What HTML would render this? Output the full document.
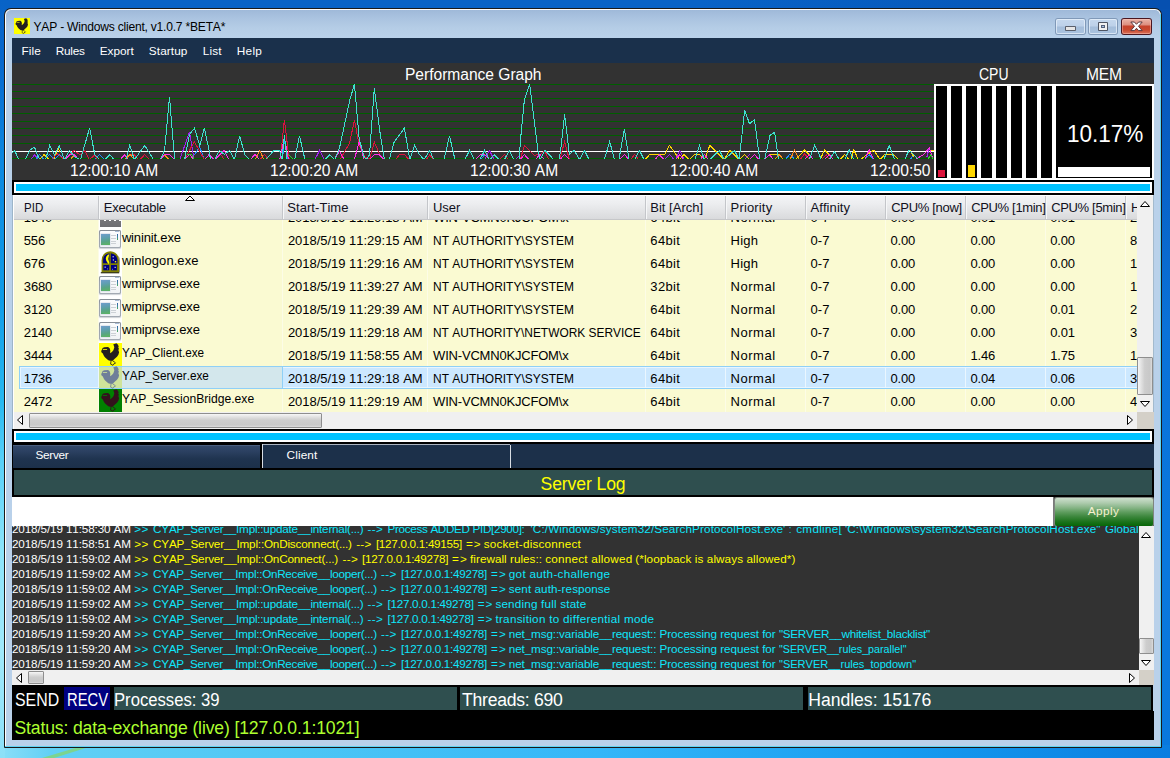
<!DOCTYPE html>
<html><head><meta charset="utf-8"><title>YAP - Windows client</title>
<style>
html,body{margin:0;padding:0;}
body{width:1170px;height:758px;overflow:hidden;position:relative;font-family:"Liberation Sans",sans-serif;background:#0a64c8;}
#r{position:absolute;left:0;top:0;width:1170px;height:758px;overflow:hidden;}
#r div,#r span,#r svg{position:absolute;}
#r span{white-space:pre;font-kerning:none;}
#r .clip{overflow:hidden;}
#r .clip div,#r .clip span,#r .clip svg{position:absolute;}
</style></head>
<body><div id="r">
<div style="left:0;top:0;width:1170px;height:758px;background:linear-gradient(180deg,#0863c7 0px,#0863c7 20px,#0b8fe6 200px,#0c96e8 420px,#0a90e6 700px,#1a9ceb 758px);"></div>
<div style="left:1160px;top:0;width:10px;height:758px;background:linear-gradient(180deg,#0650b0 0px,#075cc0 120px,#0a72d8 330px,#0a78de 560px,#0878de 758px);"></div>
<div style="left:700px;top:0;width:470px;height:9px;background:linear-gradient(90deg,rgba(6,80,176,0) 0px,rgba(6,80,176,.55) 300px,#0650b0 470px);"></div>
<div style="left:0;top:745px;width:1170px;height:13px;background:linear-gradient(90deg,#8adff8 0px,#62d0f5 50px,#4cc6f5 300px,#34b6f8 600px,#169cf0 900px,#0a7de0 1170px);"></div>
<div style="left:0;top:0;width:5px;height:758px;background:linear-gradient(180deg,#0863c7 0px,#0868cc 60px,#0c88e0 160px,#109ce8 300px,#28b8f0 400px,#58d0f8 460px,#8ce4fa 550px,#a0e8fa 650px,#8ce0f8 758px);"></div>
<svg style="left:0;top:745px" width="120" height="13"><path d="M42 13 L82 1 L92 1 L54 13 Z" fill="#86d66c" opacity="0.75"/></svg>
<div style="left:4px;top:8px;width:1158px;height:740px;background:#1a1a1a;border-radius:7px 7px 1px 1px;"></div>
<div style="left:5px;top:9px;width:1156px;height:738px;background:#fdfeff;border-radius:6px 6px 0 0;"></div>
<div style="left:6px;top:10px;width:1154px;height:736px;background:linear-gradient(180deg,#9fb9d9 0px,#aac3e0 8px,#b5cde6 18px,#b9d1ea 28px,#b9d1ea 100%);border-radius:5px 5px 0 0;"></div>
<div style="left:1160px;top:14px;width:1px;height:733px;background:#5fd3f2;"></div>
<div style="left:5px;top:746px;width:1156px;height:1px;background:#5fd3f2;"></div>
<div style="left:14px;top:18px;width:16px;height:16px;background:#ffff00;"></div>
<svg style="left:14px;top:18px" width="16" height="16" viewBox="0 0 23 23"><path d="M17.5 0.2 L19 1.7 L19.7 3.4 L19.2 4.5 L19.9 5.5 L19.4 7.2 L20.1 9.3 L19.4 11.7 L18 13.7 L16 15.4 L14.2 17.2 L13.2 17.8 L11.8 17.7 L9.8 17.5 L8.4 16.5 L6.7 15.1 L5.5 13.7 L4.6 12.3 L3.8 10.6 L2.4 9.3 L2.2 7.9 L2.9 6.7 L3.6 5.1 L5.3 4.3 L9.1 4.1 L10.8 5.5 L11.3 7.5 L11.1 10.3 L12.9 8.9 L14.4 7.2 L15.3 4.5 L14.9 2.7 L14.2 1.4 L16 0.7 Z" fill="#231f20"/><path d="M12.1 17.5 L11.6 21.1 L14 22.3 L15.3 20.5 M13.6 17.7 L16.5 19.8 L15.6 20.8" fill="none" stroke="#231f20" stroke-width="0.85" stroke-linejoin="round" stroke-linecap="round"/><rect x="3.9" y="6" width="4.2" height="0.8" fill="#ffff00"/></svg>
<span style="left:33.50px;top:21.36px;font-size:12.1px;line-height:12.1px;color:#000;letter-spacing:-0.229px;">YAP - Windows client, v1.0.7 *BETA*</span>
<div style="left:1055px;top:18px;width:31px;height:17px;border-radius:3px;background:#8099b8;"></div>
<div style="left:1056px;top:19px;width:29px;height:15px;border-radius:2px;background:linear-gradient(180deg,#c5d8ee 0px,#bdd1e9 7px,#a5bedb 8px,#aac3df 15px);box-shadow:inset 0 0 0 1px rgba(235,243,252,.7);"></div>
<div style="left:1088px;top:18px;width:30px;height:17px;border-radius:3px;background:#8099b8;"></div>
<div style="left:1089px;top:19px;width:28px;height:15px;border-radius:2px;background:linear-gradient(180deg,#c5d8ee 0px,#bdd1e9 7px,#a5bedb 8px,#aac3df 15px);box-shadow:inset 0 0 0 1px rgba(235,243,252,.7);"></div>
<div style="left:1121px;top:18px;width:31px;height:17px;border-radius:3px;background:#4a1620;"></div>
<div style="left:1122px;top:19px;width:29px;height:15px;border-radius:2px;background:linear-gradient(180deg,#eab4a8 0px,#dd8d7e 6px,#c6432c 7px,#c9492f 11px,#d9745c 15px);box-shadow:inset 0 0 0 1px rgba(255,200,190,.45);"></div>
<div style="left:1065px;top:26px;width:11px;height:5px;border-radius:1px;background:#5a5f6b;"></div><div style="left:1066px;top:27px;width:9px;height:3px;background:#e6e6e6;"></div>
<div style="left:1098px;top:22px;width:10px;height:9px;border-radius:1px;background:#4e5462;"></div><div style="left:1099px;top:23px;width:8px;height:7px;background:#f0f0f0;"></div><div style="left:1101px;top:25px;width:4px;height:3px;background:#54607a;"></div><div style="left:1102px;top:26px;width:2px;height:1px;background:#a8c0de;"></div>
<svg style="left:1129px;top:20px" width="15" height="13" viewBox="0 0 15 13"><path d="M1.8 2 L5.4 2 L7.5 4.3 L9.6 2 L13.2 2 L9.5 6.3 L13.2 10.6 L9.6 10.6 L7.5 8.3 L5.4 10.6 L1.8 10.6 L5.5 6.3 Z" fill="#fff" stroke="#5b3a40" stroke-width="1" stroke-linejoin="round"/></svg>
<div style="left:12px;top:38px;width:1142px;height:702px;background:#323232;"></div>
<div style="left:12px;top:38px;width:1142px;height:25px;background:#1a304b;"></div>
<span style="left:21.50px;top:45.91px;font-size:11.8px;line-height:11.8px;color:#fff;letter-spacing:0.096px;">File</span>
<span style="left:55.70px;top:45.91px;font-size:11.8px;line-height:11.8px;color:#fff;letter-spacing:-0.234px;">Rules</span>
<span style="left:99.70px;top:45.91px;font-size:11.8px;line-height:11.8px;color:#fff;letter-spacing:-0.018px;">Export</span>
<span style="left:148.80px;top:45.91px;font-size:11.8px;line-height:11.8px;color:#fff;letter-spacing:0.093px;">Startup</span>
<span style="left:202.80px;top:45.91px;font-size:11.8px;line-height:11.8px;color:#fff;letter-spacing:0.085px;">List</span>
<span style="left:236.80px;top:45.91px;font-size:11.8px;line-height:11.8px;color:#fff;letter-spacing:0.284px;">Help</span>
<span style="left:405.00px;top:67.29px;font-size:15.6px;line-height:15.6px;color:#fff;letter-spacing:-0.027px;">Performance Graph</span>
<span style="left:978.90px;top:67.49px;font-size:15.6px;line-height:15.6px;color:#fff;transform-origin:0 0;transform:scaleX(0.8987);">CPU</span>
<span style="left:1085.90px;top:67.49px;font-size:15.6px;line-height:15.6px;color:#fff;letter-spacing:-0.097px;">MEM</span>
<svg style="left:12px;top:63px;overflow:hidden" width="922" height="96" viewBox="12 63 922 96" shape-rendering="crispEdges"><rect x="12" y="84" width="922" height="1" fill="#005e00"/><rect x="12" y="91" width="922" height="1" fill="#005e00"/><rect x="12" y="98" width="922" height="1" fill="#005e00"/><rect x="12" y="106" width="922" height="1" fill="#005e00"/><rect x="12" y="113" width="922" height="1" fill="#005e00"/><rect x="12" y="121" width="922" height="1" fill="#005e00"/><rect x="12" y="128" width="922" height="1" fill="#005e00"/><rect x="12" y="135" width="922" height="1" fill="#005e00"/><rect x="12" y="143" width="922" height="1" fill="#005e00"/><rect x="12" y="158" width="922" height="1" fill="#005e00"/><rect x="12" y="150.5" width="922" height="1.5" fill="#ffffff"/><polyline points="30.5,159.7 34.6,155.0 38.7,159.7" fill="none" stroke="#a020f0" stroke-width="1"/><polyline points="179.8,159.7 189.4,132.0 194.2,159.7" fill="none" stroke="#a020f0" stroke-width="1"/><polyline points="314.8,159.7 319.6,150.4 324.4,159.7" fill="none" stroke="#a020f0" stroke-width="1"/><polyline points="484.6,159.7 489.4,150.4 494.2,159.7" fill="none" stroke="#a020f0" stroke-width="1"/><polyline points="515.4,159.7 520.2,154.5" fill="none" stroke="#a020f0" stroke-width="1"/><polyline points="664.7,159.7 669.5,154.5 674.3,159.7" fill="none" stroke="#a020f0" stroke-width="1"/><polyline points="675.6,159.7 679.7,150.4 684.5,159.7" fill="none" stroke="#a020f0" stroke-width="1"/><polyline points="744.7,159.7 749.5,154.5" fill="none" stroke="#a020f0" stroke-width="1"/><polyline points="926.9,157.0 929.2,147.7 932.3,157.0" fill="none" stroke="#a020f0" stroke-width="1"/><polyline points="35.3,159.7 39.4,154.5 44.2,159.7 49.7,154.5 54.4,159.7 59.2,154.5 64.4,159.7" fill="none" stroke="#1e90ff" stroke-width="1"/><polyline points="94.8,159.7 99.6,154.5 104.4,159.7" fill="none" stroke="#1e90ff" stroke-width="1"/><polyline points="194.2,155.2 199.7,147.0 204.4,159.7" fill="none" stroke="#1e90ff" stroke-width="1"/><polyline points="480.5,159.7 484.6,154.9" fill="none" stroke="#1e90ff" stroke-width="1"/><polyline points="785.4,159.7 790.0,153.8 794.6,159.7" fill="none" stroke="#1e90ff" stroke-width="1"/><polyline points="864.6,159.7 869.2,154.6 873.8,159.7" fill="none" stroke="#1e90ff" stroke-width="1"/><polyline points="910.0,159.7 913.8,154.6" fill="none" stroke="#1e90ff" stroke-width="1"/><polyline points="282.5,159.7 284.4,140.0 287.5,159.7" fill="none" stroke="#1e90ff" stroke-width="1"/><polyline points="39.4,159.7 44.2,154.5 49.0,159.7" fill="none" stroke="#ffd700" stroke-width="1"/><polyline points="53.8,159.7 57.9,148.4 60.0,152.0" fill="none" stroke="#ffd700" stroke-width="1"/><polyline points="644.9,159.7 649.7,154.5 664.7,154.5 669.5,145.4 679.7,159.7 683.8,154.5 689.3,159.7 694.8,154.5 699.6,154.5 704.4,159.7 709.8,145.4 724.2,159.7 729.7,150.4 739.2,159.7 744.7,154.5 749.5,159.7" fill="none" stroke="#ffd700" stroke-width="1"/><polyline points="770.0,154.6 778.5,154.6" fill="none" stroke="#ffd700" stroke-width="1"/><polyline points="795.4,159.7 804.6,150.0 813.8,159.7" fill="none" stroke="#ffd700" stroke-width="1"/><polyline points="820.0,159.7 824.6,150.0 833.8,159.7" fill="none" stroke="#ffd700" stroke-width="1"/><polyline points="840.0,159.7 844.6,154.6 849.2,159.7" fill="none" stroke="#ffd700" stroke-width="1"/><polyline points="850.8,159.7 853.8,150.0 858.5,159.7" fill="none" stroke="#ffd700" stroke-width="1"/><polyline points="860.0,159.7 873.8,150.0 880.0,159.7 884.6,154.6 893.8,154.6 898.5,159.7" fill="none" stroke="#ffd700" stroke-width="1"/><polyline points="910.0,150.0 913.8,157.0" fill="none" stroke="#ffd700" stroke-width="1"/><polyline points="930.0,150.5 934.0,150.5" fill="none" stroke="#ffd700" stroke-width="1"/><polyline points="51.0,159.7 57.2,153.8 64.7,159.7" fill="none" stroke="#dc143c" stroke-width="1"/><polyline points="69.5,154.5 74.3,150.4 79.8,154.9 84.5,150.4 89.3,159.7 94.8,154.9 97.5,159.7" fill="none" stroke="#dc143c" stroke-width="1"/><polyline points="129.7,154.5 134.4,154.9 138.5,159.7" fill="none" stroke="#dc143c" stroke-width="1"/><polyline points="139.9,159.7 144.7,154.5 149.5,159.7" fill="none" stroke="#dc143c" stroke-width="1"/><polyline points="184.6,159.7 194.2,141.5 204.4,159.7" fill="none" stroke="#dc143c" stroke-width="1"/><polyline points="219.5,152.5 224.3,159.7" fill="none" stroke="#dc143c" stroke-width="1"/><polyline points="259.8,159.7 264.6,154.5 268.7,159.7" fill="none" stroke="#dc143c" stroke-width="1"/><polyline points="280.3,159.7 284.4,119.7 289.2,159.7" fill="none" stroke="#dc143c" stroke-width="1"/><polyline points="340.0,159.7 349.7,143.0 354.4,119.7 359.2,145.6 364.7,156.6 369.5,159.7 374.3,142.2 379.7,154.5 383.8,159.7" fill="none" stroke="#dc143c" stroke-width="1"/><polyline points="395.5,159.7 399.6,154.5 404.4,154.5 409.1,159.7" fill="none" stroke="#dc143c" stroke-width="1"/><polyline points="426.2,159.7 429.7,155.0 433.8,159.7" fill="none" stroke="#dc143c" stroke-width="1"/><polyline points="499.7,159.7 504.4,154.5 508.5,159.7" fill="none" stroke="#dc143c" stroke-width="1"/><polyline points="520.2,159.7 524.3,145.6 534.5,155.2 540.0,154.5 544.8,151.0 548.9,159.7" fill="none" stroke="#dc143c" stroke-width="1"/><polyline points="559.8,159.7 564.6,141.5 569.4,159.7" fill="none" stroke="#dc143c" stroke-width="1"/><polyline points="630.5,159.7 634.6,154.5 638.7,159.7" fill="none" stroke="#dc143c" stroke-width="1"/><polyline points="800.0,159.7 804.6,153.8 809.2,159.7" fill="none" stroke="#dc143c" stroke-width="1"/><polyline points="821.5,159.7 826.2,154.6 829.2,159.7" fill="none" stroke="#dc143c" stroke-width="1"/><polyline points="64.7,159.7 70.2,154.5 74.3,154.5 78.4,159.7" fill="none" stroke="#ff2ee6" stroke-width="1"/><polyline points="120.1,159.7 124.9,154.5 127.6,159.7" fill="none" stroke="#ff2ee6" stroke-width="1"/><polyline points="159.8,159.7 164.5,154.5 170.0,154.5" fill="none" stroke="#ff2ee6" stroke-width="1"/><polyline points="160.0,159.7 164.8,154.5 169.6,154.5 174.4,159.7" fill="none" stroke="#ff2ee6" stroke-width="1"/><polyline points="184.6,159.7 189.4,154.5 194.2,159.7" fill="none" stroke="#ff2ee6" stroke-width="1"/><polyline points="204.4,159.7 209.2,154.5 214.0,159.7" fill="none" stroke="#ff2ee6" stroke-width="1"/><polyline points="214.7,159.7 219.5,154.9 224.3,150.4 229.0,159.7" fill="none" stroke="#ff2ee6" stroke-width="1"/><polyline points="250.3,159.7 255.0,154.5 259.8,159.7" fill="none" stroke="#ff2ee6" stroke-width="1"/><polyline points="279.7,159.7 284.4,137.4 288.5,159.7" fill="none" stroke="#ff2ee6" stroke-width="1"/><polyline points="334.6,159.7 339.4,151.1 344.2,159.7" fill="none" stroke="#ff2ee6" stroke-width="1"/><polyline points="354.4,159.7 359.2,141.5 364.0,159.7" fill="none" stroke="#ff2ee6" stroke-width="1"/><polyline points="369.5,159.7 374.3,154.5 379.0,154.5 384.5,159.7" fill="none" stroke="#ff2ee6" stroke-width="1"/><polyline points="475.0,159.7 480.5,154.5 484.6,154.5 489.4,159.7" fill="none" stroke="#ff2ee6" stroke-width="1"/><polyline points="520.2,159.7 524.3,154.5 529.0,159.7" fill="none" stroke="#ff2ee6" stroke-width="1"/><polyline points="535.2,159.7 540.0,154.5 544.1,159.7" fill="none" stroke="#ff2ee6" stroke-width="1"/><polyline points="559.8,159.7 564.6,154.5 569.4,159.7" fill="none" stroke="#ff2ee6" stroke-width="1"/><polyline points="619.6,159.7 624.4,154.5 629.1,159.7" fill="none" stroke="#ff2ee6" stroke-width="1"/><polyline points="655.1,159.7 659.2,154.5 664.0,159.7" fill="none" stroke="#ff2ee6" stroke-width="1"/><polyline points="675.6,159.7 679.7,154.5 683.8,159.7" fill="none" stroke="#ff2ee6" stroke-width="1"/><polyline points="700.3,159.7 704.4,154.5 708.5,159.7" fill="none" stroke="#ff2ee6" stroke-width="1"/><polyline points="749.5,159.7 754.5,154.5 759.1,159.7" fill="none" stroke="#ff2ee6" stroke-width="1"/><polyline points="764.6,159.7 769.2,154.6 773.8,159.7" fill="none" stroke="#ff2ee6" stroke-width="1"/><polyline points="804.6,159.7 809.2,154.6 813.8,159.7" fill="none" stroke="#ff2ee6" stroke-width="1"/><polyline points="824.6,159.7 829.2,154.6 833.8,159.7" fill="none" stroke="#ff2ee6" stroke-width="1"/><polyline points="864.6,159.7 869.2,150.0 873.8,159.7" fill="none" stroke="#ff2ee6" stroke-width="1"/><polyline points="915.4,159.7 924.6,153.8 929.2,147.7 933.1,159.7" fill="none" stroke="#ff2ee6" stroke-width="1"/><polyline points="70.2,159.7 74.3,154.9" fill="none" stroke="#ff8c1a" stroke-width="1"/><polyline points="124.9,159.7 130.1,154.5 134.4,159.7" fill="none" stroke="#ff8c1a" stroke-width="1"/><polyline points="164.5,155.2 169.3,159.7" fill="none" stroke="#ff8c1a" stroke-width="1"/><polyline points="255.0,159.7 259.8,150.4 263.9,159.7" fill="none" stroke="#ff8c1a" stroke-width="1"/><polyline points="774.6,159.7 779.2,154.6 783.8,159.7" fill="none" stroke="#ff8c1a" stroke-width="1"/><polyline points="790.0,159.7 794.6,150.0 799.2,159.7" fill="none" stroke="#ff8c1a" stroke-width="1"/><polyline points="187.4,154.5 191.5,154.5 194.5,159.7" fill="none" stroke="#32cd32" stroke-width="1"/><polyline points="288.5,154.5 294.0,159.7" fill="none" stroke="#32cd32" stroke-width="1"/><polyline points="927.7,159.7 930.8,154.6 933.1,159.7" fill="none" stroke="#32cd32" stroke-width="1"/><polyline points="12.0,153.0 14.5,150.4 18.9,159.7 25.0,159.7 30.2,149.7 34.6,147.3 38.0,156.6 40.8,159.7 45.5,159.7 49.7,145.4 54.4,155.0 59.2,145.4 64.4,159.7 69.5,150.4 74.3,156.6 79.8,159.7 80.4,159.7 89.6,128.1 94.8,154.5 99.6,159.7 105.0,159.7 109.8,154.5 113.9,159.7 126.2,159.7 129.7,145.4 134.4,159.7 144.7,145.4 153.6,159.7 160.4,159.7 164.6,150.0 169.5,97.1 174.4,156.6 174.8,159.7 184.6,159.7 189.4,134.7 194.5,128.1 199.7,145.6 204.4,128.1 209.2,151.1 210.5,159.7 214.7,159.7 219.5,150.4 224.3,154.5 229.7,150.4 234.5,159.7 239.6,136.0 244.8,154.5 249.6,159.7 265.3,159.7 274.2,150.4 279.7,150.4 282.0,159.7 284.4,134.7 287.0,159.7 294.7,159.7 299.5,136.0 305.0,159.7 325.0,159.7 329.8,154.5 334.6,159.7 339.4,148.4 349.7,100.5 354.4,84.1 359.2,138.8 364.0,156.6 366.0,159.7 369.5,155.0 374.3,88.2 379.7,130.6 384.5,159.7 389.3,159.7 394.1,142.2 404.4,128.1 409.8,159.7 414.6,145.4 419.4,154.5 424.2,159.7 429.7,150.4 433.8,159.7 444.0,159.7 449.5,136.0 455.0,159.7 464.8,159.7 469.6,150.4 474.4,159.7 479.8,159.7 484.6,150.4 489.4,159.7 490.0,159.7 494.2,154.5 499.0,159.7 504.4,159.7 509.2,150.4 514.0,159.7 519.5,159.7 520.2,143.0 524.3,100.5 529.7,84.1 532.5,107.4 538.0,151.0 540.0,159.7 544.8,150.4 549.6,155.0 553.7,159.7 559.1,159.7 561.2,145.6 564.6,114.2 568.7,148.4 569.4,154.5 574.2,150.4 579.7,159.7 584.4,150.4 589.2,159.7 604.3,159.7 609.7,141.5 614.5,159.7 618.9,159.7 624.4,129.2 629.1,159.7 634.6,159.7 639.4,150.4 644.2,159.7 694.8,159.7 699.6,145.4 704.4,159.7 709.8,159.7 719.4,150.4 724.2,159.7 734.4,150.4 739.2,159.7 742.0,134.7 744.7,110.0 749.5,123.8 754.5,119.7 759.7,159.7 764.6,159.7 770.0,135.4 774.6,132.3 778.5,159.7 809.2,159.7 814.6,145.4 819.2,154.6 821.5,159.7 829.2,159.7 834.6,151.5 839.2,159.7 844.6,159.7 849.2,150.0 853.8,159.7 883.8,159.7 889.2,145.4 894.6,159.7 904.6,159.7 909.2,150.0 918.5,159.7 934.0,159.7" fill="none" stroke="#40e0d0" stroke-width="1"/></svg>
<span style="left:70.00px;top:163.39px;font-size:15.6px;line-height:15.6px;color:#fff;letter-spacing:-0.022px;">12:00:10 AM</span>
<span style="left:270.00px;top:163.39px;font-size:15.6px;line-height:15.6px;color:#fff;letter-spacing:-0.022px;">12:00:20 AM</span>
<span style="left:470.00px;top:163.39px;font-size:15.6px;line-height:15.6px;color:#fff;letter-spacing:-0.022px;">12:00:30 AM</span>
<span style="left:670.00px;top:163.39px;font-size:15.6px;line-height:15.6px;color:#fff;letter-spacing:-0.022px;">12:00:40 AM</span>
<div class="clip" style="left:860px;top:160px;width:74px;height:20px;">
<span style="left:10.00px;top:3.39px;font-size:15.6px;line-height:15.6px;color:#fff;letter-spacing:-0.022px;">12:00:50 AM</span>
</div>
<div style="left:934px;top:84px;width:220px;height:96px;background:#ffffff;"></div>
<div style="left:936px;top:86px;width:11px;height:92px;background:#000;"></div>
<div style="left:951px;top:86px;width:11px;height:92px;background:#000;"></div>
<div style="left:966px;top:86px;width:11px;height:92px;background:#000;"></div>
<div style="left:981px;top:86px;width:11px;height:92px;background:#000;"></div>
<div style="left:996px;top:86px;width:11px;height:92px;background:#000;"></div>
<div style="left:1011px;top:86px;width:11px;height:92px;background:#000;"></div>
<div style="left:1026px;top:86px;width:11px;height:92px;background:#000;"></div>
<div style="left:1041px;top:86px;width:11px;height:92px;background:#000;"></div>
<div style="left:1056px;top:86px;width:96px;height:92px;background:#000;"></div>
<div style="left:938px;top:170px;width:7px;height:6.5px;background:#dc143c;"></div>
<div style="left:968px;top:165px;width:7px;height:11.5px;background:#ffd700;"></div>
<div style="left:1058px;top:167px;width:92px;height:9.5px;background:#fff;"></div>
<span style="left:1066.50px;top:123.31px;font-size:23.5px;line-height:23.5px;color:#fff;transform-origin:0 0;transform:scaleX(0.9586);">10.17%</span>
<div style="left:12px;top:180px;width:1142px;height:15px;background:#000;"></div>
<div style="left:14px;top:182px;width:1138px;height:11px;background:#fff;"></div>
<div style="left:16px;top:184px;width:1134px;height:7px;background:#00c3ff;"></div>
<div style="left:12px;top:195px;width:1142px;height:234px;background:#ffffff;"></div>
<div style="left:12px;top:195px;width:1px;height:234px;background:#9db5c9;"></div>
<div style="left:14px;top:220px;width:1123px;height:192px;background:#fafad2;"></div>
<div style="left:98px;top:220px;width:1px;height:192px;background:#fcfce6;"></div>
<div style="left:282px;top:220px;width:1px;height:192px;background:#fcfce6;"></div>
<div style="left:427px;top:220px;width:1px;height:192px;background:#fcfce6;"></div>
<div style="left:645px;top:220px;width:1px;height:192px;background:#fcfce6;"></div>
<div style="left:725px;top:220px;width:1px;height:192px;background:#fcfce6;"></div>
<div style="left:805px;top:220px;width:1px;height:192px;background:#fcfce6;"></div>
<div style="left:885px;top:220px;width:1px;height:192px;background:#fcfce6;"></div>
<div style="left:965px;top:220px;width:1px;height:192px;background:#fcfce6;"></div>
<div style="left:1045px;top:220px;width:1px;height:192px;background:#fcfce6;"></div>
<div style="left:1125px;top:220px;width:1px;height:192px;background:#fcfce6;"></div>
<div style="left:99px;top:220px;width:23px;height:192px;background:#ffffff;"></div>
<div class="clip" style="left:14px;top:220px;width:1123px;height:192px;">
<div style="left:86px;top:-13px;width:21px;height:20px;background:linear-gradient(180deg,#5f5f63,#77777b 60%,#6e6e72);"></div>
<div style="left:90px;top:0px;width:2px;height:1px;background:#fff;"></div>
<div style="left:95px;top:0px;width:2px;height:1px;background:#fff;"></div>
<div style="left:100px;top:0px;width:2px;height:1px;background:#fff;"></div>
<div style="left:105px;top:0px;width:2px;height:1px;background:#fff;"></div>
<span style="left:9.80px;top:-9.30px;font-size:13.0px;line-height:13.0px;color:#000000;letter-spacing:-0.130px;">1540</span>
<span style="left:273.90px;top:-9.30px;font-size:13.0px;line-height:13.0px;color:#000000;letter-spacing:-0.022px;">2018/5/19 11:29:18 AM</span>
<span style="left:419.10px;top:-9.30px;font-size:13.0px;line-height:13.0px;color:#000000;letter-spacing:-0.192px;">WIN-VCMN0KJCFOM\x</span>
<span style="left:636.30px;top:-9.30px;font-size:13.0px;line-height:13.0px;color:#000000;letter-spacing:0.359px;">64bit</span>
<span style="left:716.60px;top:-9.30px;font-size:13.0px;line-height:13.0px;color:#000000;letter-spacing:0.516px;">Normal</span>
<span style="left:796.50px;top:-9.30px;font-size:13.0px;line-height:13.0px;color:#000000;letter-spacing:0.068px;">0-7</span>
<span style="left:876.50px;top:-9.30px;font-size:13.0px;line-height:13.0px;color:#000000;letter-spacing:-0.203px;">0.00</span>
<span style="left:956.50px;top:-9.30px;font-size:13.0px;line-height:13.0px;color:#000000;letter-spacing:-0.203px;">0.01</span>
<span style="left:1036.30px;top:-9.30px;font-size:13.0px;line-height:13.0px;color:#000000;letter-spacing:-0.203px;">0.01</span>
<span style="left:1116.10px;top:-9.30px;font-size:13.0px;line-height:13.0px;color:#000000;letter-spacing:-0.034px;">2</span>
<div style="left:85px;top:10px;width:22px;height:18px;border-radius:1.5px;background:linear-gradient(180deg,#848b94,#9aa2ac 30%,#a2a9b2);box-shadow:0 1px 1px rgba(120,130,140,.35);"></div><div style="left:86px;top:11px;width:20px;height:16px;border-radius:1px;background:linear-gradient(180deg,#fbfcfd,#f1f3f5);"></div><div style="left:87.4px;top:14px;width:8.4px;height:11px;background:linear-gradient(170deg,#6f9dcc 0%,#5f9fb0 35%,#58a486 65%,#5cb55e 100%);box-shadow:0 0 0 0.6px #d5dde8;"></div><div style="left:97px;top:15px;width:4.6px;height:1.3px;background:#cdd1d6;"></div><div style="left:97px;top:18.2px;width:4.6px;height:1.3px;background:#cdd1d6;"></div><div style="left:97px;top:21px;width:4.6px;height:1px;background:#cdd1d6;"></div><div style="left:97px;top:23.2px;width:4.6px;height:1px;background:#cdd1d6;"></div><div style="left:102.8px;top:13.8px;width:1.6px;height:6.2px;background:linear-gradient(180deg,#2e5fa8,#3f86a0 55%,#4caf50);"></div><div style="left:101px;top:11.4px;width:3.6px;height:0.8px;background:#a9bcd6;"></div>
<span style="left:9.80px;top:13.70px;font-size:13.0px;line-height:13.0px;color:#000000;letter-spacing:-0.168px;">556</span>
<span style="left:107.90px;top:10.50px;font-size:13.0px;line-height:13.0px;color:#000000;letter-spacing:-0.164px;">wininit.exe</span>
<span style="left:273.90px;top:13.70px;font-size:13.0px;line-height:13.0px;color:#000000;letter-spacing:-0.022px;">2018/5/19 11:29:15 AM</span>
<span style="left:419.10px;top:13.70px;font-size:13.0px;line-height:13.0px;color:#000000;transform-origin:0 0;transform:scaleX(0.9202);">NT AUTHORITY\SYSTEM</span>
<span style="left:636.30px;top:13.70px;font-size:13.0px;line-height:13.0px;color:#000000;letter-spacing:0.359px;">64bit</span>
<span style="left:716.60px;top:13.70px;font-size:13.0px;line-height:13.0px;color:#000000;letter-spacing:0.188px;">High</span>
<span style="left:796.50px;top:13.70px;font-size:13.0px;line-height:13.0px;color:#000000;letter-spacing:0.068px;">0-7</span>
<span style="left:876.50px;top:13.70px;font-size:13.0px;line-height:13.0px;color:#000000;letter-spacing:-0.203px;">0.00</span>
<span style="left:956.50px;top:13.70px;font-size:13.0px;line-height:13.0px;color:#000000;letter-spacing:-0.203px;">0.00</span>
<span style="left:1036.30px;top:13.70px;font-size:13.0px;line-height:13.0px;color:#000000;letter-spacing:-0.203px;">0.00</span>
<span style="left:1116.10px;top:13.70px;font-size:13.0px;line-height:13.0px;color:#000000;letter-spacing:-0.034px;">8</span>
<svg style="left:85px;top:31px" width="23" height="23" viewBox="0 0 23 23"><path d="M19.2 4.4 Q21 6.4 21 9.6 L21 21.2 L20 21.2 L20 9 Z" fill="#9a9a9a"/><path d="M2.6 21.4 L2.6 9.4 Q2.8 1.2 11.3 0.3 Q19.8 1.2 20 9.4 L20 21.4 Z" fill="#808000"/><path d="M4.1 12.2 L4.1 9 Q4.4 3.2 10.4 2.3 L10.4 12.2 Z" fill="#000080"/><path d="M11.8 12.2 L11.8 2.3 Q18 3.2 18.4 9 L18.4 12.2 Z" fill="#000080"/><rect x="4.3" y="14" width="5.9" height="5.3" fill="#000080"/><rect x="12" y="14" width="5.9" height="5.3" fill="#000080"/><path d="M9.3 4.2 Q5.6 7.4 9.6 11.9 Q7.6 7.8 9.3 4.2 Z" fill="#ffff00" stroke="#ffff00" stroke-width="1.5" stroke-linejoin="round"/><rect x="13.6" y="5.2" width="1.1" height="1.1" fill="#fff"/><rect x="13.8" y="8.4" width="1.1" height="1.1" fill="#fff"/><rect x="15.8" y="10" width="1.4" height="1.4" fill="#ffff00"/><rect x="5.6" y="15.6" width="1.1" height="1.1" fill="#fff"/><rect x="8" y="17.4" width="1" height="1" fill="#7070e0"/><rect x="15.6" y="15.8" width="1.1" height="1.1" fill="#fff"/><rect x="13" y="17.8" width="1" height="1" fill="#7070e0"/><rect x="1.8" y="21.2" width="18.4" height="1.1" fill="#1e1e00"/></svg>
<span style="left:9.80px;top:36.70px;font-size:13.0px;line-height:13.0px;color:#000000;letter-spacing:-0.168px;">676</span>
<span style="left:107.90px;top:33.50px;font-size:13.0px;line-height:13.0px;color:#000000;letter-spacing:0.059px;">winlogon.exe</span>
<span style="left:273.90px;top:36.70px;font-size:13.0px;line-height:13.0px;color:#000000;letter-spacing:-0.022px;">2018/5/19 11:29:16 AM</span>
<span style="left:419.10px;top:36.70px;font-size:13.0px;line-height:13.0px;color:#000000;transform-origin:0 0;transform:scaleX(0.9202);">NT AUTHORITY\SYSTEM</span>
<span style="left:636.30px;top:36.70px;font-size:13.0px;line-height:13.0px;color:#000000;letter-spacing:0.359px;">64bit</span>
<span style="left:716.60px;top:36.70px;font-size:13.0px;line-height:13.0px;color:#000000;letter-spacing:0.188px;">High</span>
<span style="left:796.50px;top:36.70px;font-size:13.0px;line-height:13.0px;color:#000000;letter-spacing:0.068px;">0-7</span>
<span style="left:876.50px;top:36.70px;font-size:13.0px;line-height:13.0px;color:#000000;letter-spacing:-0.203px;">0.00</span>
<span style="left:956.50px;top:36.70px;font-size:13.0px;line-height:13.0px;color:#000000;letter-spacing:-0.203px;">0.00</span>
<span style="left:1036.30px;top:36.70px;font-size:13.0px;line-height:13.0px;color:#000000;letter-spacing:-0.203px;">0.00</span>
<span style="left:1116.10px;top:36.70px;font-size:13.0px;line-height:13.0px;color:#000000;letter-spacing:-0.034px;">1</span>
<div style="left:85px;top:56px;width:22px;height:18px;border-radius:1.5px;background:linear-gradient(180deg,#848b94,#9aa2ac 30%,#a2a9b2);box-shadow:0 1px 1px rgba(120,130,140,.35);"></div><div style="left:86px;top:57px;width:20px;height:16px;border-radius:1px;background:linear-gradient(180deg,#fbfcfd,#f1f3f5);"></div><div style="left:87.4px;top:60px;width:8.4px;height:11px;background:linear-gradient(170deg,#6f9dcc 0%,#5f9fb0 35%,#58a486 65%,#5cb55e 100%);box-shadow:0 0 0 0.6px #d5dde8;"></div><div style="left:97px;top:61px;width:4.6px;height:1.3px;background:#cdd1d6;"></div><div style="left:97px;top:64.2px;width:4.6px;height:1.3px;background:#cdd1d6;"></div><div style="left:97px;top:67px;width:4.6px;height:1px;background:#cdd1d6;"></div><div style="left:97px;top:69.2px;width:4.6px;height:1px;background:#cdd1d6;"></div><div style="left:102.8px;top:59.8px;width:1.6px;height:6.2px;background:linear-gradient(180deg,#2e5fa8,#3f86a0 55%,#4caf50);"></div><div style="left:101px;top:57.4px;width:3.6px;height:0.8px;background:#a9bcd6;"></div>
<span style="left:9.80px;top:59.70px;font-size:13.0px;line-height:13.0px;color:#000000;letter-spacing:-0.130px;">3680</span>
<span style="left:107.90px;top:56.50px;font-size:13.0px;line-height:13.0px;color:#000000;letter-spacing:-0.131px;">wmiprvse.exe</span>
<span style="left:273.90px;top:59.70px;font-size:13.0px;line-height:13.0px;color:#000000;letter-spacing:-0.022px;">2018/5/19 11:39:27 AM</span>
<span style="left:419.10px;top:59.70px;font-size:13.0px;line-height:13.0px;color:#000000;transform-origin:0 0;transform:scaleX(0.9202);">NT AUTHORITY\SYSTEM</span>
<span style="left:636.30px;top:59.70px;font-size:13.0px;line-height:13.0px;color:#000000;letter-spacing:0.359px;">32bit</span>
<span style="left:716.60px;top:59.70px;font-size:13.0px;line-height:13.0px;color:#000000;letter-spacing:0.516px;">Normal</span>
<span style="left:796.50px;top:59.70px;font-size:13.0px;line-height:13.0px;color:#000000;letter-spacing:0.068px;">0-7</span>
<span style="left:876.50px;top:59.70px;font-size:13.0px;line-height:13.0px;color:#000000;letter-spacing:-0.203px;">0.00</span>
<span style="left:956.50px;top:59.70px;font-size:13.0px;line-height:13.0px;color:#000000;letter-spacing:-0.203px;">0.00</span>
<span style="left:1036.30px;top:59.70px;font-size:13.0px;line-height:13.0px;color:#000000;letter-spacing:-0.203px;">0.00</span>
<span style="left:1116.10px;top:59.70px;font-size:13.0px;line-height:13.0px;color:#000000;letter-spacing:-0.034px;">1</span>
<div style="left:85px;top:79px;width:22px;height:18px;border-radius:1.5px;background:linear-gradient(180deg,#848b94,#9aa2ac 30%,#a2a9b2);box-shadow:0 1px 1px rgba(120,130,140,.35);"></div><div style="left:86px;top:80px;width:20px;height:16px;border-radius:1px;background:linear-gradient(180deg,#fbfcfd,#f1f3f5);"></div><div style="left:87.4px;top:83px;width:8.4px;height:11px;background:linear-gradient(170deg,#6f9dcc 0%,#5f9fb0 35%,#58a486 65%,#5cb55e 100%);box-shadow:0 0 0 0.6px #d5dde8;"></div><div style="left:97px;top:84px;width:4.6px;height:1.3px;background:#cdd1d6;"></div><div style="left:97px;top:87.2px;width:4.6px;height:1.3px;background:#cdd1d6;"></div><div style="left:97px;top:90px;width:4.6px;height:1px;background:#cdd1d6;"></div><div style="left:97px;top:92.2px;width:4.6px;height:1px;background:#cdd1d6;"></div><div style="left:102.8px;top:82.8px;width:1.6px;height:6.2px;background:linear-gradient(180deg,#2e5fa8,#3f86a0 55%,#4caf50);"></div><div style="left:101px;top:80.4px;width:3.6px;height:0.8px;background:#a9bcd6;"></div>
<span style="left:9.80px;top:82.70px;font-size:13.0px;line-height:13.0px;color:#000000;letter-spacing:-0.130px;">3120</span>
<span style="left:107.90px;top:79.50px;font-size:13.0px;line-height:13.0px;color:#000000;letter-spacing:-0.131px;">wmiprvse.exe</span>
<span style="left:273.90px;top:82.70px;font-size:13.0px;line-height:13.0px;color:#000000;letter-spacing:-0.022px;">2018/5/19 11:29:39 AM</span>
<span style="left:419.10px;top:82.70px;font-size:13.0px;line-height:13.0px;color:#000000;transform-origin:0 0;transform:scaleX(0.9202);">NT AUTHORITY\SYSTEM</span>
<span style="left:636.30px;top:82.70px;font-size:13.0px;line-height:13.0px;color:#000000;letter-spacing:0.359px;">64bit</span>
<span style="left:716.60px;top:82.70px;font-size:13.0px;line-height:13.0px;color:#000000;letter-spacing:0.516px;">Normal</span>
<span style="left:796.50px;top:82.70px;font-size:13.0px;line-height:13.0px;color:#000000;letter-spacing:0.068px;">0-7</span>
<span style="left:876.50px;top:82.70px;font-size:13.0px;line-height:13.0px;color:#000000;letter-spacing:-0.203px;">0.00</span>
<span style="left:956.50px;top:82.70px;font-size:13.0px;line-height:13.0px;color:#000000;letter-spacing:-0.203px;">0.00</span>
<span style="left:1036.30px;top:82.70px;font-size:13.0px;line-height:13.0px;color:#000000;letter-spacing:-0.203px;">0.01</span>
<span style="left:1116.10px;top:82.70px;font-size:13.0px;line-height:13.0px;color:#000000;letter-spacing:-0.034px;">2</span>
<div style="left:85px;top:102px;width:22px;height:18px;border-radius:1.5px;background:linear-gradient(180deg,#848b94,#9aa2ac 30%,#a2a9b2);box-shadow:0 1px 1px rgba(120,130,140,.35);"></div><div style="left:86px;top:103px;width:20px;height:16px;border-radius:1px;background:linear-gradient(180deg,#fbfcfd,#f1f3f5);"></div><div style="left:87.4px;top:106px;width:8.4px;height:11px;background:linear-gradient(170deg,#6f9dcc 0%,#5f9fb0 35%,#58a486 65%,#5cb55e 100%);box-shadow:0 0 0 0.6px #d5dde8;"></div><div style="left:97px;top:107px;width:4.6px;height:1.3px;background:#cdd1d6;"></div><div style="left:97px;top:110.2px;width:4.6px;height:1.3px;background:#cdd1d6;"></div><div style="left:97px;top:113px;width:4.6px;height:1px;background:#cdd1d6;"></div><div style="left:97px;top:115.2px;width:4.6px;height:1px;background:#cdd1d6;"></div><div style="left:102.8px;top:105.8px;width:1.6px;height:6.2px;background:linear-gradient(180deg,#2e5fa8,#3f86a0 55%,#4caf50);"></div><div style="left:101px;top:103.4px;width:3.6px;height:0.8px;background:#a9bcd6;"></div>
<span style="left:9.80px;top:105.70px;font-size:13.0px;line-height:13.0px;color:#000000;letter-spacing:-0.130px;">2140</span>
<span style="left:107.90px;top:102.50px;font-size:13.0px;line-height:13.0px;color:#000000;letter-spacing:-0.131px;">wmiprvse.exe</span>
<span style="left:273.90px;top:105.70px;font-size:13.0px;line-height:13.0px;color:#000000;letter-spacing:-0.022px;">2018/5/19 11:29:18 AM</span>
<span style="left:419.10px;top:105.70px;font-size:13.0px;line-height:13.0px;color:#000000;transform-origin:0 0;transform:scaleX(0.9162);">NT AUTHORITY\NETWORK SERVICE</span>
<span style="left:636.30px;top:105.70px;font-size:13.0px;line-height:13.0px;color:#000000;letter-spacing:0.359px;">64bit</span>
<span style="left:716.60px;top:105.70px;font-size:13.0px;line-height:13.0px;color:#000000;letter-spacing:0.516px;">Normal</span>
<span style="left:796.50px;top:105.70px;font-size:13.0px;line-height:13.0px;color:#000000;letter-spacing:0.068px;">0-7</span>
<span style="left:876.50px;top:105.70px;font-size:13.0px;line-height:13.0px;color:#000000;letter-spacing:-0.203px;">0.00</span>
<span style="left:956.50px;top:105.70px;font-size:13.0px;line-height:13.0px;color:#000000;letter-spacing:-0.203px;">0.00</span>
<span style="left:1036.30px;top:105.70px;font-size:13.0px;line-height:13.0px;color:#000000;letter-spacing:-0.203px;">0.01</span>
<span style="left:1116.10px;top:105.70px;font-size:13.0px;line-height:13.0px;color:#000000;letter-spacing:-0.034px;">3</span>
<div style="left:85px;top:123px;width:23px;height:23px;background:#ffff00;"></div>
<svg style="left:85px;top:123px" width="23" height="23" viewBox="0 0 23 23"><path d="M17.5 0.2 L19 1.7 L19.7 3.4 L19.2 4.5 L19.9 5.5 L19.4 7.2 L20.1 9.3 L19.4 11.7 L18 13.7 L16 15.4 L14.2 17.2 L13.2 17.8 L11.8 17.7 L9.8 17.5 L8.4 16.5 L6.7 15.1 L5.5 13.7 L4.6 12.3 L3.8 10.6 L2.4 9.3 L2.2 7.9 L2.9 6.7 L3.6 5.1 L5.3 4.3 L9.1 4.1 L10.8 5.5 L11.3 7.5 L11.1 10.3 L12.9 8.9 L14.4 7.2 L15.3 4.5 L14.9 2.7 L14.2 1.4 L16 0.7 Z" fill="#231f20"/><path d="M12.1 17.5 L11.6 21.1 L14 22.3 L15.3 20.5 M13.6 17.7 L16.5 19.8 L15.6 20.8" fill="none" stroke="#231f20" stroke-width="0.85" stroke-linejoin="round" stroke-linecap="round"/><rect x="3.9" y="6" width="4.2" height="0.8" fill="#ffff00"/></svg>
<span style="left:9.80px;top:128.70px;font-size:13.0px;line-height:13.0px;color:#000000;letter-spacing:-0.130px;">3444</span>
<span style="left:107.90px;top:125.50px;font-size:13.0px;line-height:13.0px;color:#000000;transform-origin:0 0;transform:scaleX(0.9016);">YAP_Client.exe</span>
<span style="left:273.90px;top:128.70px;font-size:13.0px;line-height:13.0px;color:#000000;letter-spacing:-0.022px;">2018/5/19 11:58:55 AM</span>
<span style="left:419.10px;top:128.70px;font-size:13.0px;line-height:13.0px;color:#000000;letter-spacing:-0.192px;">WIN-VCMN0KJCFOM\x</span>
<span style="left:636.30px;top:128.70px;font-size:13.0px;line-height:13.0px;color:#000000;letter-spacing:0.359px;">64bit</span>
<span style="left:716.60px;top:128.70px;font-size:13.0px;line-height:13.0px;color:#000000;letter-spacing:0.516px;">Normal</span>
<span style="left:796.50px;top:128.70px;font-size:13.0px;line-height:13.0px;color:#000000;letter-spacing:0.068px;">0-7</span>
<span style="left:876.50px;top:128.70px;font-size:13.0px;line-height:13.0px;color:#000000;letter-spacing:-0.203px;">0.00</span>
<span style="left:956.50px;top:128.70px;font-size:13.0px;line-height:13.0px;color:#000000;letter-spacing:-0.203px;">1.46</span>
<span style="left:1036.30px;top:128.70px;font-size:13.0px;line-height:13.0px;color:#000000;letter-spacing:-0.203px;">1.75</span>
<span style="left:1116.10px;top:128.70px;font-size:13.0px;line-height:13.0px;color:#000000;letter-spacing:-0.034px;">1</span>
<div style="left:5px;top:146px;width:1118px;height:23px;background:#cce8ff;"></div>
<div style="left:5px;top:146px;width:1118px;height:1px;background:#8fd0f7;"></div>
<div style="left:5px;top:168px;width:1118px;height:1px;background:#8fd0f7;"></div>
<div style="left:5px;top:147px;width:1118px;height:1px;background:#e8f5ff;"></div>
<div style="left:5px;top:167px;width:1118px;height:1px;background:#e8f5ff;"></div>
<div style="left:5px;top:146px;width:1px;height:23px;background:#8fd0f7;"></div>
<div style="left:6px;top:147px;width:1px;height:21px;background:#e8f5ff;"></div>
<div style="left:84px;top:147px;width:1px;height:21px;background:#eaf6ff;"></div>
<div style="left:268px;top:147px;width:1px;height:21px;background:#eaf6ff;"></div>
<div style="left:413px;top:147px;width:1px;height:21px;background:#eaf6ff;"></div>
<div style="left:631px;top:147px;width:1px;height:21px;background:#eaf6ff;"></div>
<div style="left:711px;top:147px;width:1px;height:21px;background:#eaf6ff;"></div>
<div style="left:791px;top:147px;width:1px;height:21px;background:#eaf6ff;"></div>
<div style="left:871px;top:147px;width:1px;height:21px;background:#eaf6ff;"></div>
<div style="left:951px;top:147px;width:1px;height:21px;background:#eaf6ff;"></div>
<div style="left:1031px;top:147px;width:1px;height:21px;background:#eaf6ff;"></div>
<div style="left:1111px;top:147px;width:1px;height:21px;background:#eaf6ff;"></div>
<div style="left:108px;top:147px;width:160px;height:21px;background:#d3e7ec;"></div>
<div style="left:85px;top:147px;width:23px;height:21px;background:#cfe39a;"></div>
<div style="left:268px;top:147px;width:1px;height:21px;background:#8fd0f7;"></div>
<svg style="left:85px;top:146px" width="23" height="23" viewBox="0 0 23 23"><path d="M17.5 0.2 L19 1.7 L19.7 3.4 L19.2 4.5 L19.9 5.5 L19.4 7.2 L20.1 9.3 L19.4 11.7 L18 13.7 L16 15.4 L14.2 17.2 L13.2 17.8 L11.8 17.7 L9.8 17.5 L8.4 16.5 L6.7 15.1 L5.5 13.7 L4.6 12.3 L3.8 10.6 L2.4 9.3 L2.2 7.9 L2.9 6.7 L3.6 5.1 L5.3 4.3 L9.1 4.1 L10.8 5.5 L11.3 7.5 L11.1 10.3 L12.9 8.9 L14.4 7.2 L15.3 4.5 L14.9 2.7 L14.2 1.4 L16 0.7 Z" fill="#6f7f99"/><path d="M12.1 17.5 L11.6 21.1 L14 22.3 L15.3 20.5 M13.6 17.7 L16.5 19.8 L15.6 20.8" fill="none" stroke="#6f7f99" stroke-width="0.85" stroke-linejoin="round" stroke-linecap="round"/><rect x="3.9" y="6" width="4.2" height="0.8" fill="#cfe39a"/></svg>
<span style="left:9.80px;top:151.70px;font-size:13.0px;line-height:13.0px;color:#000000;letter-spacing:-0.130px;">1736</span>
<span style="left:107.90px;top:148.50px;font-size:13.0px;line-height:13.0px;color:#000000;transform-origin:0 0;transform:scaleX(0.9042);">YAP_Server.exe</span>
<span style="left:273.90px;top:151.70px;font-size:13.0px;line-height:13.0px;color:#000000;letter-spacing:-0.022px;">2018/5/19 11:29:18 AM</span>
<span style="left:419.10px;top:151.70px;font-size:13.0px;line-height:13.0px;color:#000000;transform-origin:0 0;transform:scaleX(0.9202);">NT AUTHORITY\SYSTEM</span>
<span style="left:636.30px;top:151.70px;font-size:13.0px;line-height:13.0px;color:#000000;letter-spacing:0.359px;">64bit</span>
<span style="left:716.60px;top:151.70px;font-size:13.0px;line-height:13.0px;color:#000000;letter-spacing:0.516px;">Normal</span>
<span style="left:796.50px;top:151.70px;font-size:13.0px;line-height:13.0px;color:#000000;letter-spacing:0.068px;">0-7</span>
<span style="left:876.50px;top:151.70px;font-size:13.0px;line-height:13.0px;color:#000000;letter-spacing:-0.203px;">0.00</span>
<span style="left:956.50px;top:151.70px;font-size:13.0px;line-height:13.0px;color:#000000;letter-spacing:-0.203px;">0.04</span>
<span style="left:1036.30px;top:151.70px;font-size:13.0px;line-height:13.0px;color:#000000;letter-spacing:-0.203px;">0.06</span>
<span style="left:1116.10px;top:151.70px;font-size:13.0px;line-height:13.0px;color:#000000;letter-spacing:-0.034px;">3</span>
<div style="left:85px;top:169px;width:23px;height:23px;background:#008000;"></div>
<svg style="left:85px;top:169px" width="23" height="23" viewBox="0 0 23 23"><path d="M17.5 0.2 L19 1.7 L19.7 3.4 L19.2 4.5 L19.9 5.5 L19.4 7.2 L20.1 9.3 L19.4 11.7 L18 13.7 L16 15.4 L14.2 17.2 L13.2 17.8 L11.8 17.7 L9.8 17.5 L8.4 16.5 L6.7 15.1 L5.5 13.7 L4.6 12.3 L3.8 10.6 L2.4 9.3 L2.2 7.9 L2.9 6.7 L3.6 5.1 L5.3 4.3 L9.1 4.1 L10.8 5.5 L11.3 7.5 L11.1 10.3 L12.9 8.9 L14.4 7.2 L15.3 4.5 L14.9 2.7 L14.2 1.4 L16 0.7 Z" fill="#33121c"/><path d="M12.1 17.5 L11.6 21.1 L14 22.3 L15.3 20.5 M13.6 17.7 L16.5 19.8 L15.6 20.8" fill="none" stroke="#33121c" stroke-width="0.85" stroke-linejoin="round" stroke-linecap="round"/><rect x="3.9" y="6" width="4.2" height="0.8" fill="#008000"/></svg>
<span style="left:9.80px;top:174.70px;font-size:13.0px;line-height:13.0px;color:#000000;letter-spacing:-0.130px;">2472</span>
<span style="left:107.90px;top:171.50px;font-size:13.0px;line-height:13.0px;color:#000000;transform-origin:0 0;transform:scaleX(0.9332);">YAP_SessionBridge.exe</span>
<span style="left:273.90px;top:174.70px;font-size:13.0px;line-height:13.0px;color:#000000;letter-spacing:-0.022px;">2018/5/19 11:29:19 AM</span>
<span style="left:419.10px;top:174.70px;font-size:13.0px;line-height:13.0px;color:#000000;letter-spacing:-0.192px;">WIN-VCMN0KJCFOM\x</span>
<span style="left:636.30px;top:174.70px;font-size:13.0px;line-height:13.0px;color:#000000;letter-spacing:0.359px;">64bit</span>
<span style="left:716.60px;top:174.70px;font-size:13.0px;line-height:13.0px;color:#000000;letter-spacing:0.516px;">Normal</span>
<span style="left:796.50px;top:174.70px;font-size:13.0px;line-height:13.0px;color:#000000;letter-spacing:0.068px;">0-7</span>
<span style="left:876.50px;top:174.70px;font-size:13.0px;line-height:13.0px;color:#000000;letter-spacing:-0.203px;">0.00</span>
<span style="left:956.50px;top:174.70px;font-size:13.0px;line-height:13.0px;color:#000000;letter-spacing:-0.203px;">0.00</span>
<span style="left:1036.30px;top:174.70px;font-size:13.0px;line-height:13.0px;color:#000000;letter-spacing:-0.203px;">0.00</span>
<span style="left:1116.10px;top:174.70px;font-size:13.0px;line-height:13.0px;color:#000000;letter-spacing:-0.034px;">4</span>
</div>
<div style="left:14px;top:196px;width:1123px;height:24px;background:linear-gradient(180deg,#f3f4f6 0px,#ecedef 8px,#e2e3e5 16px,#d9dadc 23px);"></div>
<div style="left:14px;top:219px;width:1123px;height:1px;background:#c6c7c9;"></div>
<div style="left:98px;top:196px;width:1px;height:23px;background:#c4c6ca;"></div>
<div style="left:99px;top:196px;width:1px;height:23px;background:#f6f7f8;"></div>
<div style="left:282px;top:196px;width:1px;height:23px;background:#c4c6ca;"></div>
<div style="left:283px;top:196px;width:1px;height:23px;background:#f6f7f8;"></div>
<div style="left:427px;top:196px;width:1px;height:23px;background:#c4c6ca;"></div>
<div style="left:428px;top:196px;width:1px;height:23px;background:#f6f7f8;"></div>
<div style="left:645px;top:196px;width:1px;height:23px;background:#c4c6ca;"></div>
<div style="left:646px;top:196px;width:1px;height:23px;background:#f6f7f8;"></div>
<div style="left:725px;top:196px;width:1px;height:23px;background:#c4c6ca;"></div>
<div style="left:726px;top:196px;width:1px;height:23px;background:#f6f7f8;"></div>
<div style="left:805px;top:196px;width:1px;height:23px;background:#c4c6ca;"></div>
<div style="left:806px;top:196px;width:1px;height:23px;background:#f6f7f8;"></div>
<div style="left:885px;top:196px;width:1px;height:23px;background:#c4c6ca;"></div>
<div style="left:886px;top:196px;width:1px;height:23px;background:#f6f7f8;"></div>
<div style="left:965px;top:196px;width:1px;height:23px;background:#c4c6ca;"></div>
<div style="left:966px;top:196px;width:1px;height:23px;background:#f6f7f8;"></div>
<div style="left:1045px;top:196px;width:1px;height:23px;background:#c4c6ca;"></div>
<div style="left:1046px;top:196px;width:1px;height:23px;background:#f6f7f8;"></div>
<div style="left:1125px;top:196px;width:1px;height:23px;background:#c4c6ca;"></div>
<div style="left:1126px;top:196px;width:1px;height:23px;background:#f6f7f8;"></div>
<span style="left:23.80px;top:201.00px;font-size:13.0px;line-height:13.0px;color:#101020;transform-origin:0 0;transform:scaleX(0.8859);">PID</span>
<span style="left:103.80px;top:201.00px;font-size:13.0px;line-height:13.0px;color:#101020;letter-spacing:-0.233px;">Executable</span>
<span style="left:287.30px;top:201.00px;font-size:13.0px;line-height:13.0px;color:#101020;letter-spacing:0.053px;">Start-Time</span>
<span style="left:432.90px;top:201.00px;font-size:13.0px;line-height:13.0px;color:#101020;letter-spacing:-0.038px;">User</span>
<span style="left:650.30px;top:201.00px;font-size:13.0px;line-height:13.0px;color:#101020;letter-spacing:0.005px;">Bit [Arch]</span>
<span style="left:730.60px;top:201.00px;font-size:13.0px;line-height:13.0px;color:#101020;letter-spacing:0.156px;">Priority</span>
<span style="left:810.50px;top:201.00px;font-size:13.0px;line-height:13.0px;color:#101020;letter-spacing:0.073px;">Affinity</span>
<span style="left:891.20px;top:201.00px;font-size:13.0px;line-height:13.0px;color:#101020;letter-spacing:-0.310px;">CPU% [now]</span>
<span style="left:971.20px;top:201.00px;font-size:13.0px;line-height:13.0px;color:#101020;letter-spacing:-0.339px;">CPU% [1min]</span>
<span style="left:1051.20px;top:201.00px;font-size:13.0px;line-height:13.0px;color:#101020;letter-spacing:-0.339px;">CPU% [5min]</span>
<div class="clip" style="left:1127px;top:196px;width:10px;height:23px;">
<span style="left:3.90px;top:5.00px;font-size:13.0px;line-height:13.0px;color:#101020;letter-spacing:0.209px;">H</span>
</div>
<svg style="left:184px;top:195px" width="12" height="7" viewBox="0 0 12 7"><path d="M1.5 5.5 L6 1 L10.5 5.5 Z" fill="#fff" stroke="#000" stroke-width="1"/></svg>
<div style="left:1137px;top:196px;width:16px;height:216px;background:#f0f0f0;"></div>
<div style="left:1153px;top:195px;width:1px;height:234px;background:#a3bacd;"></div>
<svg style="left:1139px;top:200px" width="12" height="8" viewBox="0 0 12 8"><path d="M1.5 6.5 L6 1.5 L10.5 6.5 Z" fill="#fff" stroke="#000" stroke-width="1"/></svg>
<svg style="left:1139px;top:400px" width="12" height="8" viewBox="0 0 12 8"><path d="M1.5 1.5 L6 6.5 L10.5 1.5 Z" fill="#fff" stroke="#000" stroke-width="1"/></svg>
<div style="left:1137px;top:357px;width:16px;height:38px;background:linear-gradient(90deg,#f6f6f6 0,#e2e2e2 22%,#cdcdcd 48%,#c8c8c8 85%,#dcdcdc 100%);border:1px solid #8e8e8e;box-sizing:border-box;border-radius:1px;"></div>
<div style="left:14px;top:412px;width:1123px;height:17px;background:#f0f0f0;"></div>
<svg style="left:16px;top:414px" width="8" height="12" viewBox="0 0 8 12"><path d="M6.5 1.5 L1.5 6 L6.5 10.5 Z" fill="#fff" stroke="#000" stroke-width="1"/></svg>
<svg style="left:1126px;top:414px" width="8" height="12" viewBox="0 0 8 12"><path d="M1.5 1.5 L6.5 6 L1.5 10.5 Z" fill="#fff" stroke="#000" stroke-width="1"/></svg>
<div style="left:29px;top:413px;width:293px;height:15px;background:linear-gradient(180deg,#f6f6f6 0,#e2e2e2 22%,#cdcdcd 48%,#c8c8c8 85%,#dcdcdc 100%);border:1px solid #8e8e8e;box-sizing:border-box;border-radius:1px;"></div>
<div style="left:1137px;top:412px;width:17px;height:17px;background:#d4d0c8;"></div>
<div style="left:12px;top:429px;width:1142px;height:15px;background:#000;"></div>
<div style="left:14px;top:431px;width:1138px;height:11px;background:#fff;"></div>
<div style="left:16px;top:433px;width:1134px;height:7px;background:#00c3ff;"></div>
<div style="left:12px;top:444px;width:1142px;height:26px;background:#1c304a;"></div>
<div style="left:12px;top:444px;width:250px;height:26px;background:#000;"></div>
<div style="left:13px;top:445px;width:247px;height:23px;background:linear-gradient(180deg,#35496a 0px,#2c4162 6px,#22375480 14px,#1c304a 23px), #1c304a;"></div>
<div style="left:13px;top:445px;width:247px;height:1px;background:#4a5f7e;"></div>
<div style="left:262px;top:444px;width:1px;height:24px;background:#d8dde4;"></div>
<div style="left:263px;top:444px;width:247px;height:1px;background:#aab3c0;"></div>
<div style="left:510px;top:445px;width:1px;height:23px;background:#d8dde4;"></div>
<div style="left:263px;top:467px;width:247px;height:1px;background:#56657c;"></div>
<div style="left:263px;top:445px;width:247px;height:23px;background:#1c304a;"></div>
<div style="left:12px;top:468px;width:1142px;height:2px;background:#000;"></div>
<span style="left:35.50px;top:450.01px;font-size:11.8px;line-height:11.8px;color:#fff;letter-spacing:-0.292px;">Server</span>
<span style="left:286.50px;top:450.01px;font-size:11.8px;line-height:11.8px;color:#fff;letter-spacing:0.138px;">Client</span>
<div style="left:12px;top:468px;width:1142px;height:29px;background:#000;"></div>
<div style="left:14px;top:470px;width:1138px;height:25px;background:#2f4f4f;"></div>
<span style="left:540.50px;top:475.80px;font-size:17.6px;line-height:17.6px;color:#ffff00;letter-spacing:-0.106px;">Server Log</span>
<div style="left:12px;top:497px;width:1042px;height:29px;background:#fff;"></div>
<div style="left:1053px;top:497px;width:1px;height:29px;background:#7a7a7a;"></div>
<div style="left:1054px;top:497px;width:100px;height:30px;background:#7f857f;border-radius:3px;"></div>
<div style="left:1055px;top:498px;width:98px;height:28px;background:linear-gradient(180deg,#cde0cd 0px,#adcbad 5px,#84b384 10px,#5f9d5f 14px,#3a853a 19px,#1a721a 24px,#076607 28px);border-radius:2px;"></div>
<span style="left:1087.80px;top:506.01px;font-size:11.8px;line-height:11.8px;color:#f6f1cf;letter-spacing:0.417px;">Apply</span>
<div style="left:12px;top:526px;width:1127px;height:144px;background:#323232;"></div>
<div class="clip" style="left:12px;top:526px;width:1127px;height:144px;">
<span style="left:-0.10px;top:-3.20px;font-size:11.7px;line-height:11.7px;color:#fff;letter-spacing:-0.120px;">2018/5/19 11:58:30 AM</span>
<span style="left:122.30px;top:-3.20px;font-size:11.7px;line-height:11.7px;color:#0ee6fb;letter-spacing:0.272px;">&gt;&gt;</span>
<span style="left:141.10px;top:-3.20px;font-size:11.7px;line-height:11.7px;color:#0ee6fb;letter-spacing:-0.213px;">CYAP_Server__Impl::update__internal(...)</span>
<span style="left:355.50px;top:-3.20px;font-size:11.7px;line-height:11.7px;color:#0ee6fb;letter-spacing:0.364px;">--&gt;</span>
<span style="left:375.60px;top:-3.20px;font-size:11.7px;line-height:11.7px;color:#0ee6fb;letter-spacing:-0.332px;">Process ADDED PID[2900]:</span>
<span style="left:518.50px;top:-3.20px;font-size:11.7px;line-height:11.7px;color:#0ee6fb;letter-spacing:0.128px;">&#x27;C:/Windows/system32/SearchProtocolHost.exe&#x27;</span>
<span style="left:776.80px;top:-3.20px;font-size:11.7px;line-height:11.7px;color:#0ee6fb;transform-origin:0 0;transform:scaleX(0.7077);">:</span>
<span style="left:784.20px;top:-3.20px;font-size:11.7px;line-height:11.7px;color:#0ee6fb;letter-spacing:0.309px;">cmdline[</span>
<span style="left:833.00px;top:-3.20px;font-size:11.7px;line-height:11.7px;color:#0ee6fb;letter-spacing:0.096px;">&#x27;C:\Windows\system32\SearchProtocolHost.exe&quot;</span>
<span style="left:1092.90px;top:-3.20px;font-size:11.7px;line-height:11.7px;color:#0ee6fb;letter-spacing:0.001px;">Global</span>
<span style="left:-0.10px;top:11.80px;font-size:11.7px;line-height:11.7px;color:#fff;letter-spacing:-0.120px;">2018/5/19 11:58:51 AM</span>
<span style="left:122.30px;top:11.80px;font-size:11.7px;line-height:11.7px;color:#ffff00;letter-spacing:0.272px;">&gt;&gt;</span>
<span style="left:141.10px;top:11.80px;font-size:11.7px;line-height:11.7px;color:#ffff00;letter-spacing:-0.182px;">CYAP_Server__Impl::OnDisconnect(...)</span>
<span style="left:344.20px;top:11.80px;font-size:11.7px;line-height:11.7px;color:#ffff00;letter-spacing:0.230px;">--&gt;</span>
<span style="left:363.90px;top:11.80px;font-size:11.7px;line-height:11.7px;color:#ffff00;letter-spacing:-0.293px;">[127.0.0.1:49155]</span>
<span style="left:453.90px;top:11.80px;font-size:11.7px;line-height:11.7px;color:#ffff00;letter-spacing:1.022px;">=&gt;</span>
<span style="left:471.70px;top:11.80px;font-size:11.7px;line-height:11.7px;color:#ffff00;letter-spacing:0.221px;">socket-disconnect</span>
<span style="left:-0.10px;top:26.80px;font-size:11.7px;line-height:11.7px;color:#fff;letter-spacing:-0.120px;">2018/5/19 11:59:02 AM</span>
<span style="left:122.30px;top:26.80px;font-size:11.7px;line-height:11.7px;color:#ffff00;letter-spacing:0.272px;">&gt;&gt;</span>
<span style="left:141.10px;top:26.80px;font-size:11.7px;line-height:11.7px;color:#ffff00;letter-spacing:-0.184px;">CYAP_Server__Impl::OnConnect(...)</span>
<span style="left:330.50px;top:26.80px;font-size:11.7px;line-height:11.7px;color:#ffff00;letter-spacing:0.330px;">--&gt;</span>
<span style="left:350.10px;top:26.80px;font-size:11.7px;line-height:11.7px;color:#ffff00;letter-spacing:-0.293px;">[127.0.0.1:49278]</span>
<span style="left:440.10px;top:26.80px;font-size:11.7px;line-height:11.7px;color:#ffff00;letter-spacing:1.022px;">=&gt;</span>
<span style="left:458.10px;top:26.80px;font-size:11.7px;line-height:11.7px;color:#ffff00;letter-spacing:0.028px;">firewall rules::</span>
<span style="left:533.20px;top:26.80px;font-size:11.7px;line-height:11.7px;color:#ffff00;letter-spacing:0.231px;">connect allowed</span>
<span style="left:623.30px;top:26.80px;font-size:11.7px;line-height:11.7px;color:#ffff00;letter-spacing:0.096px;">(*loopback is always allowed*)</span>
<span style="left:-0.10px;top:41.80px;font-size:11.7px;line-height:11.7px;color:#fff;letter-spacing:-0.120px;">2018/5/19 11:59:02 AM</span>
<span style="left:122.30px;top:41.80px;font-size:11.7px;line-height:11.7px;color:#0ee6fb;letter-spacing:0.272px;">&gt;&gt;</span>
<span style="left:141.10px;top:41.80px;font-size:11.7px;line-height:11.7px;color:#0ee6fb;letter-spacing:-0.277px;">CYAP_Server__Impl::OnReceive__looper(...)</span>
<span style="left:368.90px;top:41.80px;font-size:11.7px;line-height:11.7px;color:#0ee6fb;letter-spacing:0.364px;">--&gt;</span>
<span style="left:389.00px;top:41.80px;font-size:11.7px;line-height:11.7px;color:#0ee6fb;letter-spacing:-0.293px;">[127.0.0.1:49278]</span>
<span style="left:479.10px;top:41.80px;font-size:11.7px;line-height:11.7px;color:#0ee6fb;letter-spacing:0.972px;">=&gt;</span>
<span style="left:496.80px;top:41.80px;font-size:11.7px;line-height:11.7px;color:#0ee6fb;letter-spacing:0.296px;">got auth-challenge</span>
<span style="left:-0.10px;top:56.80px;font-size:11.7px;line-height:11.7px;color:#fff;letter-spacing:-0.120px;">2018/5/19 11:59:02 AM</span>
<span style="left:122.30px;top:56.80px;font-size:11.7px;line-height:11.7px;color:#0ee6fb;letter-spacing:0.272px;">&gt;&gt;</span>
<span style="left:141.10px;top:56.80px;font-size:11.7px;line-height:11.7px;color:#0ee6fb;letter-spacing:-0.277px;">CYAP_Server__Impl::OnReceive__looper(...)</span>
<span style="left:368.90px;top:56.80px;font-size:11.7px;line-height:11.7px;color:#0ee6fb;letter-spacing:0.364px;">--&gt;</span>
<span style="left:389.00px;top:56.80px;font-size:11.7px;line-height:11.7px;color:#0ee6fb;letter-spacing:-0.293px;">[127.0.0.1:49278]</span>
<span style="left:479.10px;top:56.80px;font-size:11.7px;line-height:11.7px;color:#0ee6fb;letter-spacing:0.972px;">=&gt;</span>
<span style="left:496.80px;top:56.80px;font-size:11.7px;line-height:11.7px;color:#0ee6fb;letter-spacing:0.080px;">sent auth-response</span>
<span style="left:-0.10px;top:71.80px;font-size:11.7px;line-height:11.7px;color:#fff;letter-spacing:-0.120px;">2018/5/19 11:59:02 AM</span>
<span style="left:122.30px;top:71.80px;font-size:11.7px;line-height:11.7px;color:#0ee6fb;letter-spacing:0.272px;">&gt;&gt;</span>
<span style="left:141.10px;top:71.80px;font-size:11.7px;line-height:11.7px;color:#0ee6fb;letter-spacing:-0.213px;">CYAP_Server__Impl::update__internal(...)</span>
<span style="left:355.50px;top:71.80px;font-size:11.7px;line-height:11.7px;color:#0ee6fb;letter-spacing:0.364px;">--&gt;</span>
<span style="left:375.60px;top:71.80px;font-size:11.7px;line-height:11.7px;color:#0ee6fb;letter-spacing:-0.293px;">[127.0.0.1:49278]</span>
<span style="left:465.70px;top:71.80px;font-size:11.7px;line-height:11.7px;color:#0ee6fb;letter-spacing:0.972px;">=&gt;</span>
<span style="left:483.40px;top:71.80px;font-size:11.7px;line-height:11.7px;color:#0ee6fb;letter-spacing:0.188px;">sending full state</span>
<span style="left:-0.10px;top:86.80px;font-size:11.7px;line-height:11.7px;color:#fff;letter-spacing:-0.120px;">2018/5/19 11:59:02 AM</span>
<span style="left:122.30px;top:86.80px;font-size:11.7px;line-height:11.7px;color:#0ee6fb;letter-spacing:0.272px;">&gt;&gt;</span>
<span style="left:141.10px;top:86.80px;font-size:11.7px;line-height:11.7px;color:#0ee6fb;letter-spacing:-0.213px;">CYAP_Server__Impl::update__internal(...)</span>
<span style="left:355.50px;top:86.80px;font-size:11.7px;line-height:11.7px;color:#0ee6fb;letter-spacing:0.364px;">--&gt;</span>
<span style="left:375.60px;top:86.80px;font-size:11.7px;line-height:11.7px;color:#0ee6fb;letter-spacing:-0.293px;">[127.0.0.1:49278]</span>
<span style="left:465.70px;top:86.80px;font-size:11.7px;line-height:11.7px;color:#0ee6fb;letter-spacing:0.972px;">=&gt;</span>
<span style="left:483.40px;top:86.80px;font-size:11.7px;line-height:11.7px;color:#0ee6fb;letter-spacing:0.285px;">transition to differential mode</span>
<span style="left:-0.10px;top:101.80px;font-size:11.7px;line-height:11.7px;color:#fff;letter-spacing:-0.120px;">2018/5/19 11:59:20 AM</span>
<span style="left:122.30px;top:101.80px;font-size:11.7px;line-height:11.7px;color:#0ee6fb;letter-spacing:0.272px;">&gt;&gt;</span>
<span style="left:141.10px;top:101.80px;font-size:11.7px;line-height:11.7px;color:#0ee6fb;letter-spacing:-0.277px;">CYAP_Server__Impl::OnReceive__looper(...)</span>
<span style="left:368.90px;top:101.80px;font-size:11.7px;line-height:11.7px;color:#0ee6fb;letter-spacing:0.364px;">--&gt;</span>
<span style="left:389.00px;top:101.80px;font-size:11.7px;line-height:11.7px;color:#0ee6fb;letter-spacing:-0.293px;">[127.0.0.1:49278]</span>
<span style="left:479.10px;top:101.80px;font-size:11.7px;line-height:11.7px;color:#0ee6fb;letter-spacing:0.972px;">=&gt;</span>
<span style="left:496.80px;top:101.80px;font-size:11.7px;line-height:11.7px;color:#0ee6fb;letter-spacing:-0.112px;">net_msg::variable__request::</span>
<span style="left:647.50px;top:101.80px;font-size:11.7px;line-height:11.7px;color:#0ee6fb;letter-spacing:-0.034px;">Processing request for</span>
<span style="left:766.90px;top:101.80px;font-size:11.7px;line-height:11.7px;color:#0ee6fb;letter-spacing:-0.279px;">&quot;SERVER__whitelist_blacklist&quot;</span>
<span style="left:-0.10px;top:116.80px;font-size:11.7px;line-height:11.7px;color:#fff;letter-spacing:-0.120px;">2018/5/19 11:59:20 AM</span>
<span style="left:122.30px;top:116.80px;font-size:11.7px;line-height:11.7px;color:#0ee6fb;letter-spacing:0.272px;">&gt;&gt;</span>
<span style="left:141.10px;top:116.80px;font-size:11.7px;line-height:11.7px;color:#0ee6fb;letter-spacing:-0.277px;">CYAP_Server__Impl::OnReceive__looper(...)</span>
<span style="left:368.90px;top:116.80px;font-size:11.7px;line-height:11.7px;color:#0ee6fb;letter-spacing:0.364px;">--&gt;</span>
<span style="left:389.00px;top:116.80px;font-size:11.7px;line-height:11.7px;color:#0ee6fb;letter-spacing:-0.293px;">[127.0.0.1:49278]</span>
<span style="left:479.10px;top:116.80px;font-size:11.7px;line-height:11.7px;color:#0ee6fb;letter-spacing:0.972px;">=&gt;</span>
<span style="left:496.80px;top:116.80px;font-size:11.7px;line-height:11.7px;color:#0ee6fb;letter-spacing:-0.112px;">net_msg::variable__request::</span>
<span style="left:647.50px;top:116.80px;font-size:11.7px;line-height:11.7px;color:#0ee6fb;letter-spacing:-0.034px;">Processing request for</span>
<span style="left:766.90px;top:116.80px;font-size:11.7px;line-height:11.7px;color:#0ee6fb;transform-origin:0 0;transform:scaleX(0.9181);">&quot;SERVER__rules_parallel&quot;</span>
<span style="left:-0.10px;top:131.80px;font-size:11.7px;line-height:11.7px;color:#fff;letter-spacing:-0.120px;">2018/5/19 11:59:20 AM</span>
<span style="left:122.30px;top:131.80px;font-size:11.7px;line-height:11.7px;color:#0ee6fb;letter-spacing:0.272px;">&gt;&gt;</span>
<span style="left:141.10px;top:131.80px;font-size:11.7px;line-height:11.7px;color:#0ee6fb;letter-spacing:-0.277px;">CYAP_Server__Impl::OnReceive__looper(...)</span>
<span style="left:368.90px;top:131.80px;font-size:11.7px;line-height:11.7px;color:#0ee6fb;letter-spacing:0.364px;">--&gt;</span>
<span style="left:389.00px;top:131.80px;font-size:11.7px;line-height:11.7px;color:#0ee6fb;letter-spacing:-0.293px;">[127.0.0.1:49278]</span>
<span style="left:479.10px;top:131.80px;font-size:11.7px;line-height:11.7px;color:#0ee6fb;letter-spacing:0.972px;">=&gt;</span>
<span style="left:496.80px;top:131.80px;font-size:11.7px;line-height:11.7px;color:#0ee6fb;letter-spacing:-0.112px;">net_msg::variable__request::</span>
<span style="left:647.50px;top:131.80px;font-size:11.7px;line-height:11.7px;color:#0ee6fb;letter-spacing:-0.034px;">Processing request for</span>
<span style="left:766.90px;top:131.80px;font-size:11.7px;line-height:11.7px;color:#0ee6fb;transform-origin:0 0;transform:scaleX(0.9430);">&quot;SERVER__rules_topdown&quot;</span>
</div>
<div style="left:1139px;top:526px;width:15px;height:144px;background:#f0f0f0;"></div>
<svg style="left:1140px;top:531px" width="12" height="8" viewBox="0 0 12 8"><path d="M1.5 6.5 L6 1.5 L10.5 6.5 Z" fill="#fff" stroke="#000" stroke-width="1"/></svg>
<svg style="left:1140px;top:659px" width="12" height="8" viewBox="0 0 12 8"><path d="M1.5 1.5 L6 6.5 L10.5 1.5 Z" fill="#fff" stroke="#000" stroke-width="1"/></svg>
<div style="left:1139px;top:638px;width:15px;height:16px;background:linear-gradient(90deg,#f6f6f6 0,#e2e2e2 22%,#cdcdcd 48%,#c8c8c8 85%,#dcdcdc 100%);border:1px solid #8e8e8e;box-sizing:border-box;border-radius:1px;"></div>
<div style="left:12px;top:670px;width:1127px;height:15px;background:#f0f0f0;"></div>
<svg style="left:15px;top:672px" width="8" height="12" viewBox="0 0 8 12"><path d="M6.5 1.5 L1.5 6 L6.5 10.5 Z" fill="#fff" stroke="#000" stroke-width="1"/></svg>
<svg style="left:1128px;top:672px" width="8" height="12" viewBox="0 0 8 12"><path d="M1.5 1.5 L6.5 6 L1.5 10.5 Z" fill="#fff" stroke="#000" stroke-width="1"/></svg>
<div style="left:28px;top:671px;width:16px;height:13px;background:linear-gradient(180deg,#f6f6f6 0,#e2e2e2 22%,#cdcdcd 48%,#c8c8c8 85%,#dcdcdc 100%);border:1px solid #8e8e8e;box-sizing:border-box;border-radius:1px;"></div>
<div style="left:1139px;top:670px;width:15px;height:15px;background:#d4d0c8;"></div>
<div style="left:12px;top:685px;width:1142px;height:55px;background:#000;"></div>
<div style="left:1153px;top:685px;width:1px;height:26px;background:#b9d1ea;"></div>
<div style="left:64px;top:687px;width:46px;height:23px;background:#000080;"></div>
<div style="left:114px;top:687px;width:343px;height:23px;background:#2f4f4f;"></div>
<div style="left:460px;top:687px;width:343px;height:23px;background:#2f4f4f;"></div>
<div style="left:808px;top:687px;width:343px;height:23px;background:#2f4f4f;"></div>
<span style="left:14.90px;top:692.30px;font-size:17.6px;line-height:17.6px;color:#fff;transform-origin:0 0;transform:scaleX(0.9020);">SEND</span>
<span style="left:66.70px;top:692.30px;font-size:17.6px;line-height:17.6px;color:#fff;transform-origin:0 0;transform:scaleX(0.8386);">RECV</span>
<span style="left:114.10px;top:692.30px;font-size:17.6px;line-height:17.6px;color:#fff;transform-origin:0 0;transform:scaleX(0.9472);">Processes: 39</span>
<span style="left:462.10px;top:692.30px;font-size:17.6px;line-height:17.6px;color:#fff;letter-spacing:-0.274px;">Threads: 690</span>
<span style="left:808.20px;top:692.30px;font-size:17.6px;line-height:17.6px;color:#fff;letter-spacing:-0.012px;">Handles: 15176</span>
<span style="left:14.40px;top:720.40px;font-size:17.6px;line-height:17.6px;color:#adff2f;letter-spacing:-0.134px;">Status: data-exchange (live) [127.0.0.1:1021]</span>
</div></body></html>
